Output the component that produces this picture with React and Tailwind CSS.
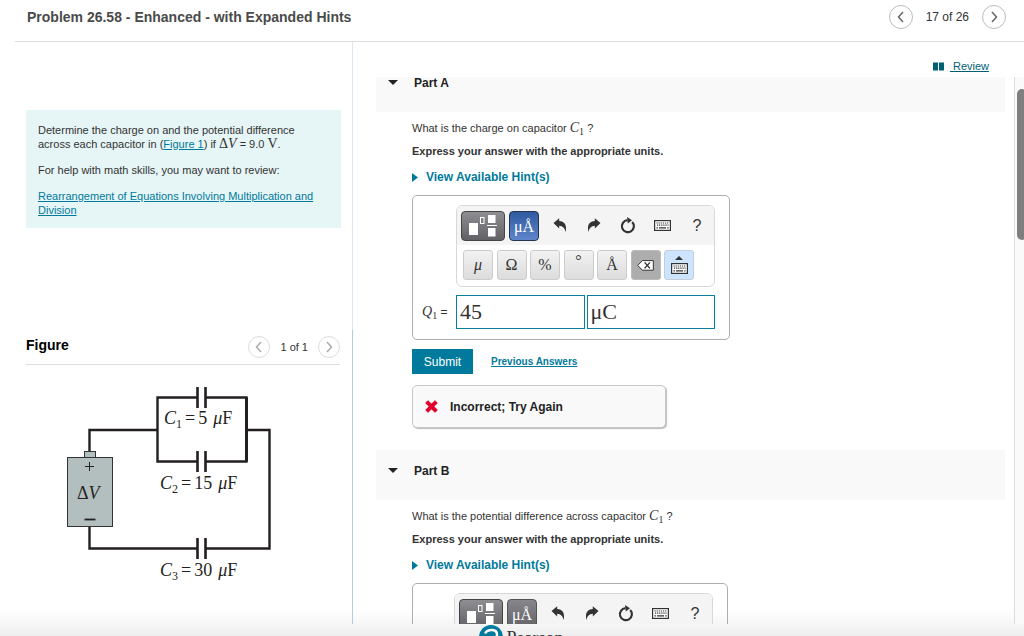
import { useState } from 'react';

function Chevron({ dir, className }) {
  return (
    <svg viewBox="0 0 12 12" className={className} fill="none" stroke="currentColor" strokeWidth="1.5">
      <path d={dir === 'left' ? 'M8 1 3.5 6 8 11' : 'M4 1 8.5 6 4 11'} />
    </svg>
  );
}

function UndoIcon({ flip }) {
  return (
    <svg viewBox="0 0 14 15" className={`w-[14px] h-[15px] ${flip ? '-scale-x-100' : ''}`} fill="currentColor">
      <path d="M0.5 5 6.2 0.2v2.7c5.2 0.2 8 4.2 6.4 11C11.8 10 9.800 7.9 6.2 7.700v2.700z" />
    </svg>
  );
}

function ResetIcon() {
  return (
    <svg viewBox="0 0 18 18" className="w-[18px] h-[18px]">
      <path d="M13.2 5A6 6 0 1 1 8.500 3.200" fill="none" stroke="currentColor" strokeWidth="2.2" />
      <path d="M8 0 13 3.200 8.800 6.500z" fill="currentColor" />
    </svg>
  );
}

function KeyboardIcon() {
  return (
    <svg viewBox="0 0 17 11" className="w-[17px] h-[11px]">
      <rect x="0.6" y="0.6" width="15.8" height="9.8" fill="#fff" stroke="currentColor" strokeWidth="1.2" />
      <path d="M2.5 3h12M3 5.2h11.5" stroke="currentColor" strokeWidth="1.2" strokeDasharray="1.2 0.9" />
      <path d="M2.5 7.8h1.4M5 7.8h7M13.2 7.8h1.4" stroke="currentColor" strokeWidth="1.3" />
    </svg>
  );
}

function BackspaceIcon() {
  return (
    <svg viewBox="0 0 17 11" className="w-[17px] h-[11px]" stroke="#333">
      <path d="M5.3 0.6h11v9.6h-11L0.8 5.4z" fill="#fff" />
      <path d="M7.6 2.4 13 8.4M13 2.4 7.6 8.4" strokeWidth="1.4" />
    </svg>
  );
}

function TemplateIcon() {
  return (
    <svg viewBox="0 0 30 24" className="w-[30px] h-6" fill="#fff">
      <rect x="1" y="9" width="9" height="12" />
      <rect x="12.5" y="3.5" width="3.5" height="6" fill="none" stroke="#fff" />
      <rect x="20" y="1" width="7.5" height="8" />
      <rect x="19" y="11" width="10" height="1" />
      <rect x="20" y="14" width="7.5" height="8.5" />
    </svg>
  );
}

function CapName() {
  return (
    <span className="font-['Liberation_Serif',serif] text-[14px] leading-none">
      <i>C</i>
      <sub className="text-[10px]">1</sub>
    </span>
  );
}

const unitKeys = [
  { label: 'micro', text: 'μ', cls: 'italic leading-7' },
  { label: 'ohm', text: 'Ω', cls: 'leading-7' },
  { label: 'percent', text: '%', cls: 'leading-7' },
  { label: 'degree', text: '°', cls: 'leading-5 pb-2' },
  { label: 'angstrom', text: 'Å', cls: 'leading-7' },
];

function Toolbar({ unitsActive }) {
  return (
    <div className="rounded-md border border-[#d8d8d8] bg-white text-[#333] overflow-hidden">
      <div className="flex items-center gap-1 bg-[#f4f4f4] h-[39px] pl-1">
        <button
          aria-label="Templates"
          className="w-11 h-[30px] shrink-0 rounded-sm border border-[#444] bg-linear-to-b from-[#8e8e93] to-[#626266] flex items-center justify-center"
        >
          <TemplateIcon />
        </button>
        <button
          aria-label="Units"
          className={`w-[30px] h-[30px] shrink-0 rounded-sm border text-white font-['Liberation_Serif',serif] text-[16px] leading-[30px] ${
            unitsActive
              ? 'border-[#24344f] bg-linear-to-b from-[#2f5a9f] to-[#5f86cc]'
              : 'border-[#555] bg-linear-to-b from-[#86868b] to-[#646468]'
          }`}
        >
          μÅ
        </button>
        <div className="grid grid-cols-5 flex-1 items-center">
          <button aria-label="Undo" className="flex justify-center"><UndoIcon /></button>
          <button aria-label="Redo" className="flex justify-center"><UndoIcon flip /></button>
          <button aria-label="Reset" className="flex justify-center"><ResetIcon /></button>
          <button aria-label="Keyboard shortcuts" className="flex justify-center"><KeyboardIcon /></button>
          <button className="text-[16px] leading-5">?</button>
        </div>
      </div>
      <div className="flex justify-between pt-[5px] pb-1.5 pl-1.5 pr-5">
        {unitKeys.map((k) => (
          <button
            key={k.label}
            aria-label={k.label}
            className={`w-[30px] h-[30px] rounded-[3px] border border-[#ccc] bg-linear-to-b from-[#f2f2f2] to-[#dcdcdc] font-['Liberation_Serif',serif] text-[16px] ${k.cls}`}
          >
            {k.text}
          </button>
        ))}
        <button
          aria-label="Backspace"
          className="w-[30px] h-[30px] rounded-[3px] border border-[#bbb] bg-[#adadad] flex items-center justify-center"
        >
          <BackspaceIcon />
        </button>
        <button
          aria-label="Toggle keyboard"
          className="w-[30px] h-[30px] rounded-[3px] border border-[#c4cedb] bg-[#cde4ff] flex flex-col items-center justify-center gap-[3px]"
        >
          <svg viewBox="0 0 8 4" className="w-2 h-1" fill="currentColor"><path d="M4 0l4 4H0z" /></svg>
          <KeyboardIcon />
        </button>
      </div>
    </div>
  );
}

function Part({ title, question, boxClass, unitsActive, symbol, children, value, onValue, unit, onUnit }) {
  return (
    <section>
      <div className="flex h-[50px] gap-4 bg-[#f9f9f9] pl-3 pt-3">
        <svg viewBox="0 0 10 5" className="w-2.5 h-[5px] mt-1.5" fill="#222"><path d="M0 0h10L5 5z" /></svg>
        <h2 className="text-[12px] leading-[18px] font-bold text-[#222]">{title}</h2>
      </div>
      <div className="pl-9 pt-2 pb-[22px]">
        <p className="h-4 leading-4 text-[11px]">
          {question} <CapName /> ?
        </p>
        <p className="mt-2 text-[11px] leading-[14px] font-bold">Express your answer with the appropriate units.</p>
        <a href="#hints" className="mt-3 flex items-center gap-2 text-[12px] leading-[14px] font-bold text-[#007a9c]">
          <svg viewBox="0 0 6 9" className="w-1.5 h-[9px]" fill="currentColor"><path d="M0 0l6 4.500L0 9z" /></svg>
          View Available Hint(s)
        </a>
        <div className={`mt-[11px] grid gap-y-2 rounded-[5px] border border-[#adadad] pt-[9px] pb-2.5 pr-3.5 ${boxClass}`}>
          <div className="col-start-2">
            <Toolbar unitsActive={unitsActive} />
          </div>
          <label htmlFor={`value-${title}`} className="self-center pl-[9px] text-[12px] leading-4 whitespace-nowrap">
            <span className="font-['Liberation_Serif',serif] text-[14px]">
              <i>{symbol}</i>
              <sub className="text-[10px]">1</sub>
            </span>{' '}
            =
          </label>
          <div className="flex gap-0.5">
            <input
              id={`value-${title}`}
              value={value}
              onChange={(e) => onValue(e.target.value)}
              className="h-[34px] w-full min-w-0 border border-[#0b7d9e] bg-white px-[3px] font-['Liberation_Serif',serif] text-[22px]"
            />
            <input
              aria-label="Units"
              value={unit}
              onChange={(e) => onUnit(e.target.value)}
              className="h-[34px] w-full min-w-0 border border-[#0b7d9e] bg-white px-[3px] font-['Liberation_Serif',serif] text-[22px]"
            />
          </div>
        </div>
        {children}
      </div>
    </section>
  );
}

const capLabels = [
  { n: 1, x: 164, y: 424, value: 5 },
  { n: 2, x: 160, y: 489, value: 15 },
  { n: 3, x: 160, y: 576, value: 30 },
];

function Circuit() {
  return (
    <svg viewBox="26 365 315 235" className="block w-[315px] h-[235px]" role="img" aria-label="Circuit with three capacitors">
      <g fill="none" stroke="#231f20" strokeWidth="2.4">
        <path d="M89.500 452V430H157" />
        <path d="M197.500 397.500H157.500V461.500H197.500M205.500 397.500H246.500V461.500H205.500" />
        <path d="M246.500 397.500V461.500" strokeWidth="3" />
        <path d="M246.500 430H269.500V548.500H205.500M197.500 548.500H89.500V527" />
        <path d="M197.500 387V408M205.500 387V408M197.500 451V472M205.500 451V472M197.500 538V559M205.500 538V559" strokeWidth="2.6" />
      </g>
      <rect x="84.500" y="451.500" width="11" height="6" fill="#b3bfbf" stroke="#333" />
      <rect x="67.500" y="457.500" width="45" height="69" fill="#b3bfbf" stroke="#333" />
      <path d="M85 466.500h9M89.500 462v9" stroke="#222" />
      <path d="M84.500 519.500h11" stroke="#222" strokeWidth="1.800" />
      <g fontFamily="Liberation Serif, serif" fontSize="18" fill="#231f20">
        <text x="77" y="499">Δ<tspan fontStyle="italic">V</tspan></text>
        {capLabels.map((c) => (
          <text key={c.n} x={c.x} y={c.y}>
            <tspan fontStyle="italic">C</tspan>
            <tspan fontSize="12" dy="4">{c.n}</tspan>
            <tspan dx="3" dy="-4">=</tspan>
            <tspan dx="3">{c.value}</tspan>
            <tspan dx="6" fontStyle="italic">μ</tspan>
            <tspan>F</tspan>
          </text>
        ))}
      </g>
    </svg>
  );
}

export default function App() {
  const [charge, setCharge] = useState('45');
  const [chargeUnit, setChargeUnit] = useState('μC');
  const [volts, setVolts] = useState('');
  const [voltsUnit, setVoltsUnit] = useState('');

  return (
    <div className="h-screen flex flex-col overflow-hidden bg-[linear-gradient(to_top,#eeeeee,#ffffff_26px)] font-['Liberation_Sans',Arial,sans-serif] text-[#333]">
      <header className="ml-[15px] flex shrink-0 items-start justify-between border-b border-[#ddd] h-[42px] pl-3 pr-[18px] pt-[5px]">
        <h1 className="text-[14px] leading-6 font-bold text-[#4a4a4a]">Problem 26.58 - Enhanced - with Expanded Hints</h1>
        <nav className="flex items-center gap-[13px]">
          <button aria-label="Previous problem" className="w-6 h-6 rounded-full border border-[#bbb] flex items-center justify-center text-[#666]">
            <Chevron dir="left" className="w-3 h-3" />
          </button>
          <span className="text-[12px] leading-6">17 of 26</span>
          <button aria-label="Next problem" className="w-6 h-6 rounded-full border border-[#bbb] flex items-center justify-center text-[#666]">
            <Chevron dir="right" className="w-3 h-3" />
          </button>
        </nav>
      </header>

      <div className="flex flex-1 min-h-0">
        <aside className="flex w-[353px] shrink-0 flex-col">
          <div className="min-h-72 border-r border-[#dbe6f1] pl-[26px] pr-[11px] pt-[68px]">
            <div className="bg-[#e6f5f6] px-3 pt-[13px] pb-[11px] text-[11px] leading-[14px] space-y-3">
              <p>
                Determine the charge on and the potential difference across each capacitor in (
                <a href="#figure" className="text-[#007a9c] underline">Figure 1</a>) if{' '}
                <span className="font-['Liberation_Serif',serif] text-[14px] leading-none">Δ<i>V</i></span> = 9.0{' '}
                <span className="font-['Liberation_Serif',serif] text-[14px] leading-none">V</span>.
              </p>
              <p>For help with math skills, you may want to review:</p>
              <p>
                <a href="#review-math" className="text-[#007a9c] underline">
                  Rearrangement of Equations Involving Multiplication and Division
                </a>
              </p>
            </div>
          </div>
          <div id="figure" className="flex-1 border-r border-[#b5cbe2] pl-[26px] pr-3 pt-1.5 overflow-hidden">
            <div className="flex items-start justify-between border-b border-[#ddd] pb-1.5">
              <h2 className="text-[14px] leading-[18px] font-bold text-black">Figure</h2>
              <div className="flex items-center gap-2.5">
                <button aria-label="Previous figure" className="w-[22px] h-[22px] rounded-full border border-[#ddd] flex items-center justify-center text-[#aaa]">
                  <Chevron dir="left" className="w-3 h-3" />
                </button>
                <span className="text-[11px]">1 of 1</span>
                <button aria-label="Next figure" className="w-[22px] h-[22px] rounded-full border border-[#ddd] flex items-center justify-center text-[#aaa]">
                  <Chevron dir="right" className="w-3 h-3" />
                </button>
              </div>
            </div>
            <Circuit />
          </div>
        </aside>

        <main className="flex flex-1 min-w-0 flex-col">
          <div className="flex h-[35px] shrink-0 items-center justify-end pr-[35px] pt-4 pb-0.5 text-[#005f73]">
            <svg viewBox="0 0 11 9" className="w-[11px] h-[9px] mr-1.5" fill="currentColor">
              <path d="M0 0.500h5v8H0zM6 0.500h5v8H6z" />
            </svg>
            <a href="#review" className="text-[11px] underline whitespace-pre"> Review</a>
          </div>
          <div className="flex flex-1 min-h-0">
            <div className="flex-1 min-w-0 overflow-hidden pl-[23px] pr-[9px]">
              <div className="-mt-[15px]">
                <Part
                  title="Part A"
                  question="What is the charge on capacitor"
                  boxClass="w-[318px] grid-cols-[43px_1fr]"
                  unitsActive
                  symbol="Q"
                  value={charge}
                  onValue={setCharge}
                  unit={chargeUnit}
                  onUnit={setChargeUnit}
                >
                  <div className="mt-[9px] flex items-center gap-[18px]">
                    <button className="h-[25px] w-[61px] bg-[#007a9c] text-[12px] text-white">Submit</button>
                    <a href="#previous" className="text-[10px] font-bold text-[#007a9c] underline">Previous Answers</a>
                  </div>
                  <div className="mt-[11px] flex h-[43px] w-[254px] items-center gap-3 rounded-[5px] border border-[#c8c8c8] bg-[#f9f9f9] pl-3 shadow-[1px_1px_1px_#bbb]">
                    <svg viewBox="0 0 12 12" className="w-[13px] h-[13px]" fill="none" stroke="#e0002b" strokeWidth="3.800">
                      <path d="M1.500 1.500l9 9M10.500 1.500l-9 9" />
                    </svg>
                    <span className="text-[12px] font-bold text-[#222]">Incorrect; Try Again</span>
                  </div>
                </Part>
                <Part
                  title="Part B"
                  question="What is the potential difference across capacitor"
                  boxClass="w-[316px] grid-cols-[41px_1fr]"
                  symbol="V"
                  value={volts}
                  onValue={setVolts}
                  unit={voltsUnit}
                  onUnit={setVoltsUnit}
                />
              </div>
            </div>
            <div className="w-2.5 shrink-0 border-l border-[#ddd] bg-[#fafafa] pl-0.5 pt-3 overflow-hidden">
              <div className="h-[151px] w-2.5 rounded-full bg-[#7f7f7f]" />
            </div>
          </div>
        </main>
      </div>

      <footer className="flex h-3 shrink-0 items-start justify-center gap-1 overflow-hidden pl-[18px]">
        <svg viewBox="0 0 24 24" className="w-6 h-6 shrink-0 mt-px">
          <circle cx="12" cy="12" r="12" fill="#007a9c" />
          <path d="M6 8.500C9 3.500 18 4 18 9.500c0 4-4 5.500-6.500 5" fill="none" stroke="#fff" strokeWidth="2.400" />
          <circle cx="11.500" cy="19" r="1.600" fill="#fff" />
        </svg>
        <span className="mt-1 font-['Liberation_Serif',serif] text-[18px] leading-5">Pearson</span>
      </footer>
    </div>
  );
}
